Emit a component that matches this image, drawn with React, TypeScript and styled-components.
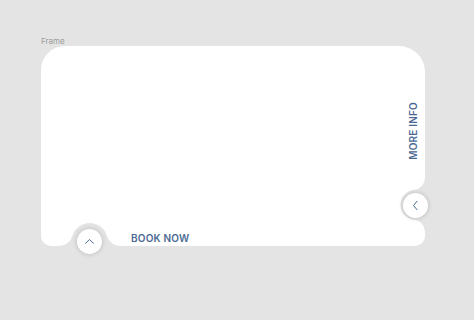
import React from "react";
import styled, { createGlobalStyle } from "styled-components";

const PAGE_BG = "#e4e4e4";
const ACCENT = "#4b6a93";

const GlobalStyle = createGlobalStyle`
  html, body {
    margin: 0;
    padding: 0;
    background: ${PAGE_BG};
    font-family: Inter, "Open Sans", "Liberation Sans", sans-serif;
  }
`;

const Page = styled.div`
  width: 474px;
  height: 320px;
  box-sizing: border-box;
  padding: 36px 0 0 41px;
  display: flex;
  flex-direction: column;
`;

const FrameLabel = styled.div`
  font-family: Inter, "Liberation Sans", sans-serif;
  font-size: 8px;
  line-height: 10px;
  color: #9d9d9d;
`;

const Card = styled.div`
  position: relative;
  width: 384px;
  height: 200px;
  background: #ffffff;
  border-radius: 24px 26px 10px 10px;
  display: flex;
  flex-direction: column;
  justify-content: space-between;
`;

const Label = styled.div`
  font-family: Inter, "Open Sans", "Liberation Sans", sans-serif;
  font-weight: 600;
  font-size: 10px;
  line-height: 10px;
  color: ${ACCENT};
  letter-spacing: 0.2px;
  white-space: nowrap;
`;

const MoreInfo = styled(Label)`
  align-self: flex-end;
  margin: 56px 7px 0 0;
  writing-mode: vertical-rl;
  transform: rotate(180deg);
`;

const BookNow = styled(Label)`
  align-self: flex-start;
  margin: 0 0 3px 90px;
`;

const NotchSvg = styled.svg`
  position: absolute;
  display: block;
  overflow: visible;
`;

const RoundButton = styled.button<{ $x: number; $y: number }>`
  position: absolute;
  left: ${(p) => p.$x - 12.5}px;
  top: ${(p) => p.$y - 12.5}px;
  width: 25px;
  height: 25px;
  padding: 0;
  border: none;
  border-radius: 50%;
  background: #ffffff;
  box-shadow: 0 0 5px rgba(0, 0, 0, 0.2);
  display: flex;
  align-items: center;
  justify-content: center;
  cursor: pointer;
`;

type NotchProps = {
  side: "bottom" | "right";
  center: number;
  depth: number;
  R: number;
  f: number;
  edge: number;
};

function Notch({ side, center, depth, R, f, edge }: NotchProps) {
  const H = 30;
  const dist = R + f;
  const dy = depth - f;
  const dx = Math.sqrt(dist * dist - dy * dy);
  const W = dx * 2;
  const cx = dx;
  const ncy = H - depth;
  const pts = [
    { x: cx - dx, y: H },
    { x: cx - (R / dist) * dx, y: ncy + (R / dist) * dy },
    { x: cx + (R / dist) * dx, y: ncy + (R / dist) * dy },
    { x: cx + dx, y: H },
  ];
  const swap = side === "right";
  const P = (p: { x: number; y: number }) =>
    swap ? `${p.y.toFixed(2)},${p.x.toFixed(2)}` : `${p.x.toFixed(2)},${p.y.toFixed(2)}`;
  const s0 = swap ? 1 : 0;
  const s1 = swap ? 0 : 1;
  const d = `M${P(pts[0])} A${f} ${f} 0 0 ${s0} ${P(pts[1])} A${R} ${R} 0 0 ${s1} ${P(
    pts[2]
  )} A${f} ${f} 0 0 ${s0} ${P(pts[3])} Z`;
  const style: React.CSSProperties = swap
    ? { left: edge - H, top: center - W / 2, width: H, height: W }
    : { left: center - W / 2, top: edge - H, width: W, height: H };
  return (
    <NotchSvg style={style} viewBox={swap ? `0 0 ${H} ${W}` : `0 0 ${W} ${H}`} aria-hidden>
      <path d={d} fill={PAGE_BG} />
    </NotchSvg>
  );
}

const ChevronUp = () => (
  <svg width="11" height="7" viewBox="0 0 11 7" fill="none">
    <path d="M1.5 5.3 L5.5 1.5 L9.5 5.3" stroke={ACCENT} strokeWidth="1" strokeLinecap="round" strokeLinejoin="round" />
  </svg>
);

const ChevronLeft = () => (
  <svg width="7" height="11" viewBox="0 0 7 11" fill="none">
    <path d="M5 1.3 L1.5 5.5 L5 9.7" stroke={ACCENT} strokeWidth="1" strokeLinecap="round" strokeLinejoin="round" />
  </svg>
);

export default function App() {
  return (
    <>
      <GlobalStyle />
      <Page>
        <FrameLabel>Frame</FrameLabel>
        <Card>
          <MoreInfo>MORE INFO</MoreInfo>
          <BookNow>BOOK NOW</BookNow>
          <Notch side="bottom" center={48.5} depth={5} R={18} f={14} edge={200} />
          <Notch side="right" center={159} depth={9.5} R={15} f={12} edge={384} />
          <RoundButton $x={48.5} $y={195} aria-label="Up">
            <ChevronUp />
          </RoundButton>
          <RoundButton $x={374.5} $y={159} aria-label="Back">
            <ChevronLeft />
          </RoundButton>
        </Card>
      </Page>
    </>
  );
}
